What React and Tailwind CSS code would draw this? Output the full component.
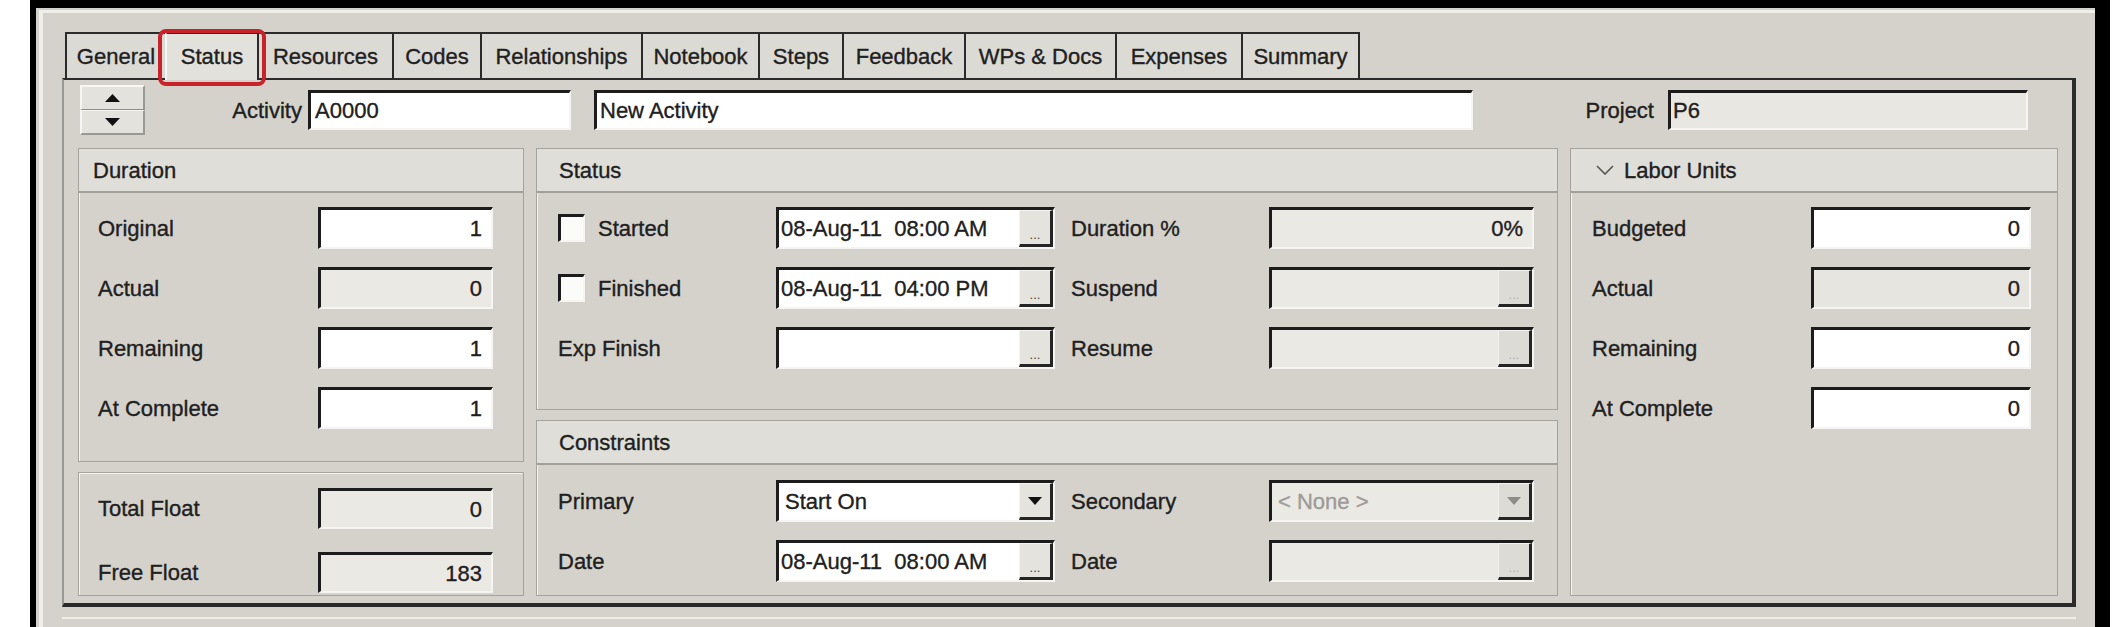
import React from "react";

const tabs = [
  { label: "General", w: "w-[100px]" },
  { label: "Status", w: "w-[92px]", active: true },
  { label: "Resources", w: "w-[135px]" },
  { label: "Codes", w: "w-[88px]" },
  { label: "Relationships", w: "w-[161px]" },
  { label: "Notebook", w: "w-[117px]" },
  { label: "Steps", w: "w-[84px]" },
  { label: "Feedback", w: "w-[122px]" },
  { label: "WPs & Docs", w: "w-[151px]" },
  { label: "Expenses", w: "w-[126px]" },
  { label: "Summary", w: "w-[119px]", last: true },
];

// classic sunken edit box
const Sunken = ({ bg = "bg-white", h = "h-[42px]", className = "", children }) => (
  <div
    className={`flex ${h} items-center overflow-hidden border-t-[3px] border-l-[3px] border-r-2 border-b-2 border-t-[#1c1c1c] border-l-[#1c1c1c] border-r-[#f6f5f2] border-b-[#f6f5f2] ${bg} ${className}`}
  >
    {children}
  </div>
);

const NumField = ({ value, bg, h }) => (
  <Sunken bg={bg} h={h}>
    <span className="ml-auto pr-[9px]">{value}</span>
  </Sunken>
);

const EllipsisBtn = ({ disabled }) => (
  <div
    className={`ml-auto flex h-full w-[34px] shrink-0 items-end justify-center border-t border-l border-r-[3px] border-b-[3px] border-t-[#f4f3ef] border-l-[#f4f3ef] border-r-[#242424] border-b-[#242424] pb-[3px] text-[13px] leading-none [-webkit-text-stroke:0px] ${
      disabled ? "bg-[#dddbd6] text-[#b3b1ac]" : "bg-[#e5e3de] text-[#444]"
    }`}
  >
    ...
  </div>
);

const DateField = ({ value = "", bg = "bg-white", disabled }) => (
  <Sunken bg={bg}>
    <span className="whitespace-pre pl-[2px]">{value}</span>
    <EllipsisBtn disabled={disabled} />
  </Sunken>
);

const SelectField = ({ value, disabled }) => (
  <Sunken bg={disabled ? "bg-[#ebe9e4]" : "bg-white"}>
    <span className={`pl-[6px] ${disabled ? "text-[#9d9b96]" : ""}`}>{value}</span>
    <div
      className={`ml-auto flex h-full w-[34px] shrink-0 items-center justify-center border-t border-l border-r-[3px] border-b-[3px] border-t-[#f4f3ef] border-l-[#f4f3ef] border-r-[#242424] border-b-[#242424] ${
        disabled ? "bg-[#dddbd6]" : "bg-[#e5e3de]"
      }`}
    >
      <svg width="14" height="8" viewBox="0 0 14 8">
        <polygon points="0,0 14,0 7,8" fill={disabled ? "#8e8c88" : "#111"} />
      </svg>
    </div>
  </Sunken>
);

const Checkbox = () => (
  <div className="h-[28px] w-[27px] shrink-0 border-t-[3px] border-l-[3px] border-r-2 border-b-2 border-t-[#1c1c1c] border-l-[#1c1c1c] border-r-[#f6f5f2] border-b-[#f6f5f2] bg-[#fbfbfa]" />
);

const Panel = ({ title, className = "", titlePad = "pl-[22px]", children }) => (
  <div
    className={`flex flex-col border border-[#a6a39d] shadow-[inset_1px_1px_0_#f4f3ef] ${className}`}
  >
    {title && (
      <div
        className={`flex h-[44px] shrink-0 items-center border-b-2 border-b-[#a19f99] bg-[#e0ded9] ${titlePad}`}
      >
        {title}
      </div>
    )}
    {children}
  </div>
);

const Label = ({ children, className = "" }) => (
  <div className={`flex items-center ${className}`}>{children}</div>
);

const Arrow = ({ down }) => (
  <svg width="15" height="8" viewBox="0 0 15 8">
    <polygon points={down ? "0,0 15,0 7.5,8" : "0,8 15,8 7.5,0"} fill="#111" />
  </svg>
);

export default function App() {
  return (
    <div className="h-[627px] w-[2119px] overflow-hidden bg-white font-['Liberation_Sans',Arial,sans-serif] text-[22px] text-[#202020] [-webkit-text-stroke:0.35px_currentColor]">
      <div className="ml-[30px] h-[627px] w-[2080px] border-t-[8px] border-l-[6px] border-r-[15px] border-t-black border-l-black border-r-black bg-[#d5d2cc] pt-[2px] pl-[3px]">
        <div className="h-full border-t-[3px] border-l-[4px] border-t-[#efeeea] border-l-[#efeeea] px-[19px] pt-[19px]">
          {/* tab strip */}
          <div className="-mb-[2px] flex items-start pl-[3px]">
            {tabs.map((t) => (
              <div
                key={t.label}
                className={`relative flex shrink-0 items-center justify-center border-t-2 border-l-2 border-t-[#2b2b2b] ${t.w} ${
                  t.active
                    ? "z-[5] h-[48px] border-l-[#f6f5f1] bg-[#e3e1dc] pb-[2px]"
                    : "h-[46px] border-l-[#2b2b2b] bg-[#dcdad5]"
                } ${t.last ? "border-r-2 border-r-[#2b2b2b]" : ""}`}
              >
                {t.label}
                {t.active && (
                  <div className="absolute -top-[5px] -bottom-[6px] -left-[9px] -right-[9px] z-10 rounded-[8px] border-[4px] border-[#c8222b]" />
                )}
              </div>
            ))}
          </div>

          {/* tab page */}
          <div className="border-t-2 border-l-2 border-r-4 border-b-4 border-t-[#2b2b2b] border-l-[#9a9893] border-r-[#2b2b2b] border-b-[#2b2b2b] px-[14px] pt-[5px] pb-[7px]">
            {/* activity row */}
            <div className="flex h-[50px] items-center">
              <div className="ml-[2px] flex h-[50px] w-[65px] flex-col">
                <div className="flex h-[25px] items-center justify-center border-t-2 border-l-2 border-r-2 border-b border-t-[#f7f6f3] border-l-[#f7f6f3] border-r-[#9a9893] border-b-[#8f8d88] bg-[#e4e2dd]">
                  <Arrow />
                </div>
                <div className="flex h-[25px] items-center justify-center border-t border-l-2 border-r-2 border-b-2 border-t-[#f7f6f3] border-l-[#f7f6f3] border-r-[#9a9893] border-b-[#9a9893] bg-[#e4e2dd]">
                  <Arrow down />
                </div>
              </div>
              <div className="w-[163px] pr-[6px] text-right">Activity</div>
              <Sunken h="h-[40px]" className="w-[263px]">
                <span className="pl-[4px]">A0000</span>
              </Sunken>
              <Sunken h="h-[40px]" className="ml-[23px] w-[879px]">
                <span className="pl-[3px]">New Activity</span>
              </Sunken>
              <div className="ml-auto mr-[30px] flex items-center">
                <span>Project</span>
                <Sunken h="h-[40px]" bg="bg-[#e9e7e2]" className="ml-[14px] w-[360px]">
                  <span className="pl-[2px]">P6</span>
                </Sunken>
              </div>
            </div>

            {/* panels */}
            <div className="mt-[13px] flex h-[448px] gap-[12px]">
              {/* left column */}
              <div className="flex w-[446px] flex-col gap-[10px]">
                <Panel title="Duration" titlePad="pl-[14px]" className="h-[314px]">
                  <div className="grid grid-cols-[220px_175px] gap-y-[18px] pt-[14px] pl-[19px]">
                    <Label>Original</Label>
                    <NumField value="1" />
                    <Label>Actual</Label>
                    <NumField value="0" bg="bg-[#ebe9e4]" />
                    <Label>Remaining</Label>
                    <NumField value="1" />
                    <Label>At Complete</Label>
                    <NumField value="1" />
                  </div>
                </Panel>
                <Panel className="flex-1">
                  <div className="grid grid-cols-[220px_175px] gap-y-[23px] pt-[15px] pl-[19px]">
                    <Label>Total Float</Label>
                    <NumField value="0" bg="bg-[#ebe9e4]" h="h-[41px]" />
                    <Label>Free Float</Label>
                    <NumField value="183" bg="bg-[#ebe9e4]" h="h-[41px]" />
                  </div>
                </Panel>
              </div>

              {/* middle column */}
              <div className="flex w-[1022px] flex-col gap-[10px]">
                <Panel title="Status" className="h-[262px]">
                  <div className="grid grid-cols-[218px_279px_214px_265px] gap-y-[18px] pt-[14px] pl-[21px]">
                    <Label>
                      <Checkbox />
                      <span className="ml-[13px]">Started</span>
                    </Label>
                    <DateField value="08-Aug-11  08:00 AM" />
                    <Label className="pl-[16px]">Duration %</Label>
                    <NumField value="0%" bg="bg-[#ebe9e4]" />

                    <Label>
                      <Checkbox />
                      <span className="ml-[13px]">Finished</span>
                    </Label>
                    <DateField value="08-Aug-11  04:00 PM" />
                    <Label className="pl-[16px]">Suspend</Label>
                    <DateField bg="bg-[#ebe9e4]" disabled />

                    <Label>Exp Finish</Label>
                    <DateField />
                    <Label className="pl-[16px]">Resume</Label>
                    <DateField bg="bg-[#ebe9e4]" disabled />
                  </div>
                </Panel>
                <Panel title="Constraints" className="flex-1">
                  <div className="grid grid-cols-[218px_279px_214px_265px] gap-y-[18px] pt-[15px] pl-[21px]">
                    <Label>Primary</Label>
                    <SelectField value="Start On" />
                    <Label className="pl-[16px]">Secondary</Label>
                    <SelectField value="< None >" disabled />

                    <Label>Date</Label>
                    <DateField value="08-Aug-11  08:00 AM" />
                    <Label className="pl-[16px]">Date</Label>
                    <DateField bg="bg-[#ebe9e4]" disabled />
                  </div>
                </Panel>
              </div>

              {/* right column */}
              <Panel
                title={
                  <span className="flex items-center">
                    <svg width="18" height="10" viewBox="0 0 18 10" className="mr-[10px]">
                      <polyline points="1,1 9,9 17,1" fill="none" stroke="#555" strokeWidth="1.6" />
                    </svg>
                    Labor Units
                  </span>
                }
                titlePad="pl-[25px]"
                className="w-[488px]"
              >
                <div className="grid grid-cols-[219px_220px] gap-y-[18px] pt-[14px] pl-[21px]">
                  <Label>Budgeted</Label>
                  <NumField value="0" />
                  <Label>Actual</Label>
                  <NumField value="0" bg="bg-[#e7e5e0]" />
                  <Label>Remaining</Label>
                  <NumField value="0" />
                  <Label>At Complete</Label>
                  <NumField value="0" />
                </div>
              </Panel>
            </div>
          </div>
          <div className="mt-[10px] h-[2px] bg-[#efeeea]" />
        </div>
      </div>
    </div>
  );
}
